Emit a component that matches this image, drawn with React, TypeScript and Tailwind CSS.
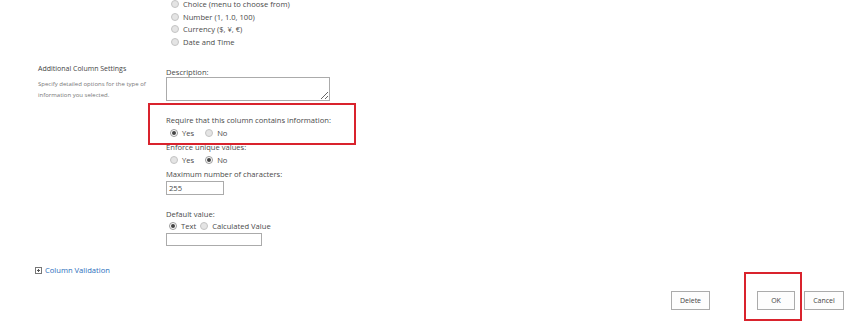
import React from 'react'

const FONT = 'font-["Open_Sans","Noto_Sans",sans-serif]'

function Radio({ checked = false }: { checked?: boolean }) {
  return (
    <span
      className={`inline-flex h-[8px] w-[8px] shrink-0 items-center justify-center rounded-full border ${
        checked ? 'border-[#9a9a9a] bg-white' : 'border-[#c4c4c4] bg-[#e4e4e4]'
      }`}
    >
      {checked && <span className="h-[4px] w-[4px] rounded-full bg-[#444]" />}
    </span>
  )
}

function Option({ label, checked, className = '' }: { label: string; checked?: boolean; className?: string }) {
  return (
    <span className={`inline-flex items-center gap-[4px] ${className}`}>
      <Radio checked={checked} />
      <span>{label}</span>
    </span>
  )
}

export default function App() {
  return (
    <div className={`relative h-[332px] w-[850px] overflow-hidden bg-white text-[7.6px] text-[#4a4a4a] ${FONT}`}>
      {/* field type list */}
      <div className="-mt-[2px] flex flex-col pl-[171px] leading-[12.6px]">
        <Option label="Choice (menu to choose from)" />
        <Option label="Number (1, 1.0, 100)" />
        <Option label="Currency ($, ¥, €)" />
        <Option label="Date and Time" />
      </div>

      {/* additional settings */}
      <div className="mt-[14px] flex">
        <div className="w-[166px] shrink-0 pl-[38px]">
          <h3 className="mt-[1px] text-[7px] leading-[12px] text-[#444]">Additional Column Settings</h3>
          <p className="mt-[4px] w-[116px] text-[6px] leading-[11px] text-[#777]">
            Specify detailed options for the type of information you selected.
          </p>
        </div>

        <div className="flex flex-col">
          <div className="mt-[4px] leading-[12px]">Description:</div>
          <textarea className="mt-[-1px] h-[24px] w-[164px] resize-y border border-[#ababab] bg-white" />

          <div className="mt-[13px] leading-[12px]">Require that this column contains information:</div>
          <div className="flex h-[14px] items-center gap-[11px] pl-[4px]">
            <Option label="Yes" checked />
            <Option label="No" />
          </div>

          <div className="mt-[1px] leading-[12px]">Enforce unique values:</div>
          <div className="flex h-[14px] items-center gap-[11px] pl-[4px]">
            <Option label="Yes" />
            <Option label="No" checked />
          </div>

          <div className="mt-[1px] leading-[12px]">Maximum number of characters:</div>
          <div className="mt-[1px] flex h-[14px] w-[58px] items-center border border-[#ababab] px-[2px]">255</div>

          <div className="mt-[13px] leading-[12px]">Default value:</div>
          <div className="flex h-[12px] items-center gap-[4px] pl-[3px]">
            <Option label="Text" checked />
            <Option label="Calculated Value" />
          </div>
          <div className="mt-[1px] h-[13px] w-[96px] border border-[#ababab]" />
        </div>
      </div>

      {/* column validation */}
      <div className="mt-[18px] flex items-center gap-[3px] pl-[35px] text-[7.6px] leading-[12px] text-[#2a6ebb]">
        <svg width="7" height="7" viewBox="0 0 7 7" className="shrink-0">
          <rect x="0.5" y="0.5" width="6" height="6" fill="#fff" stroke="#777" />
          <path d="M2 3.5h3M3.5 2v3" stroke="#555" />
        </svg>
        <span>Column Validation</span>
      </div>

      {/* buttons */}
      <div className="mt-[15px] flex justify-end gap-[9px] pr-[6px] text-[7px] text-[#444]">
        <button className="h-[19px] w-[39px] border border-[#ababab] bg-[#fdfdfd]">Delete</button>
        <div className="w-[29px]" />
        <button className="h-[19px] w-[38px] border border-[#ababab] bg-[#fdfdfd]">OK</button>
        <button className="h-[19px] w-[40px] border border-[#ababab] bg-[#fdfdfd]">Cancel</button>
      </div>

      {/* annotation boxes */}
      <div className="pointer-events-none absolute left-[148px] top-[103px] h-[42px] w-[208px] border-2 border-[#d9232d]" />
      <div className="pointer-events-none absolute left-[744px] top-[272px] h-[49px] w-[58px] border-2 border-[#d9232d]" />
    </div>
  )
}
